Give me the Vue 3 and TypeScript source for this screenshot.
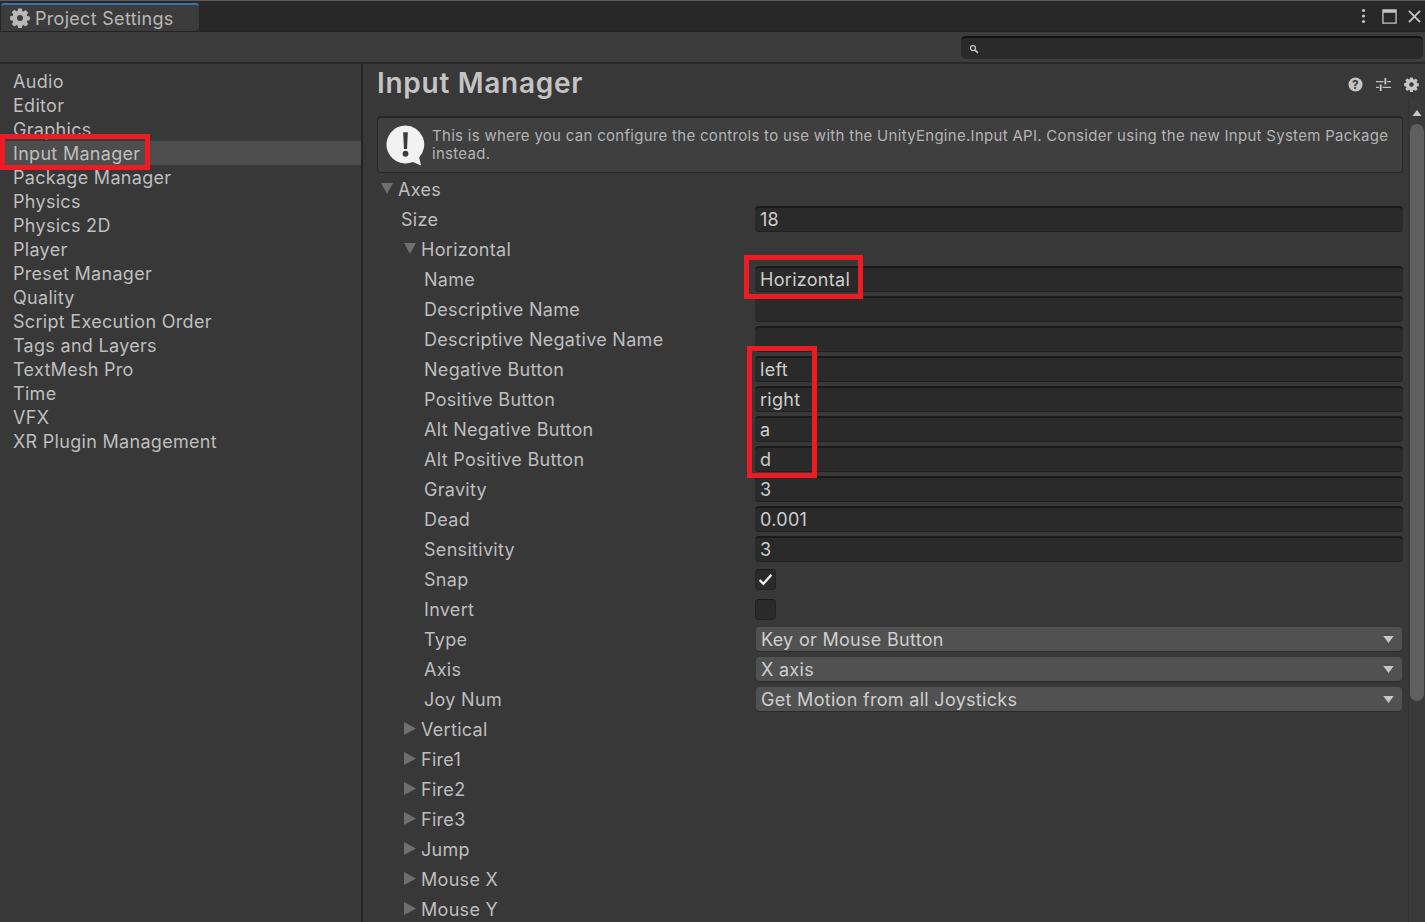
<script setup lang="ts">
type Row = { label: string; indent: number; kind: 'text' | 'check' | 'select' | 'fold' | 'plain'; value?: string; open?: boolean; checked?: boolean }
const nav = ['Audio','Editor','Graphics','Input Manager','Package Manager','Physics','Physics 2D','Player','Preset Manager','Quality','Script Execution Order','Tags and Layers','TextMesh Pro','Time','VFX','XR Plugin Management']
const rows: Row[] = [
  { label: 'Axes', indent: 0, kind: 'fold', open: true },
  { label: 'Size', indent: 1, kind: 'text', value: '18' },
  { label: 'Horizontal', indent: 1, kind: 'fold', open: true },
  { label: 'Name', indent: 2, kind: 'text', value: 'Horizontal' },
  { label: 'Descriptive Name', indent: 2, kind: 'text', value: '' },
  { label: 'Descriptive Negative Name', indent: 2, kind: 'text', value: '' },
  { label: 'Negative Button', indent: 2, kind: 'text', value: 'left' },
  { label: 'Positive Button', indent: 2, kind: 'text', value: 'right' },
  { label: 'Alt Negative Button', indent: 2, kind: 'text', value: 'a' },
  { label: 'Alt Positive Button', indent: 2, kind: 'text', value: 'd' },
  { label: 'Gravity', indent: 2, kind: 'text', value: '3' },
  { label: 'Dead', indent: 2, kind: 'text', value: '0.001' },
  { label: 'Sensitivity', indent: 2, kind: 'text', value: '3' },
  { label: 'Snap', indent: 2, kind: 'check', checked: true },
  { label: 'Invert', indent: 2, kind: 'check', checked: false },
  { label: 'Type', indent: 2, kind: 'select', value: 'Key or Mouse Button' },
  { label: 'Axis', indent: 2, kind: 'select', value: 'X axis' },
  { label: 'Joy Num', indent: 2, kind: 'select', value: 'Get Motion from all Joysticks' },
  ...['Vertical','Fire1','Fire2','Fire3','Jump','Mouse X','Mouse Y'].map((label): Row => ({ label, indent: 1, kind: 'fold', open: false })),
]
const gearPath = 'M9.8 .6h4.4l.5 3 1.6.7 2.5-1.8 3.1 3.1-1.8 2.5.7 1.6 3 .5v4.4l-3 .5-.7 1.6 1.8 2.5-3.1 3.1-2.5-1.8-1.6.7-.5 3H9.8l-.5-3-1.6-.7-2.5 1.8-3.1-3.1 1.8-2.5-.7-1.6-3-.5V9.8l3-.5.7-1.6-1.8-2.5 3.1-3.1 2.5 1.8 1.6-.7zM12 8.4a3.6 3.6 0 1 0 0 7.2 3.6 3.6 0 0 0 0-7.2z'
</script>

<template>
  <div class="window">
    <header class="tabstrip">
      <div class="tab">
        <svg class="tab-gear" viewBox="0 0 24 24"><path :d="gearPath" fill-rule="evenodd" /></svg>
        <span>Project Settings</span>
      </div>
      <div class="win-controls">
        <svg class="kebab" viewBox="0 0 4 16"><circle cx="2" cy="2.5" r="1.6" /><circle cx="2" cy="8" r="1.6" /><circle cx="2" cy="13.5" r="1.6" /></svg>
        <svg class="maxi" viewBox="0 0 16 16"><path d="M1 1h14v14H1z" fill="none" stroke-width="1.4" /><path d="M1 1h14v3H1z" class="solid" /></svg>
        <svg class="close" viewBox="0 0 14 14"><path d="M1 1l12 12M13 1L1 13" fill="none" stroke-width="2" /></svg>
      </div>
    </header>
    <div class="toolbar">
      <div class="search">
        <svg viewBox="0 0 12 12"><circle cx="4.8" cy="4.8" r="3" fill="none" stroke-width="1.5" /><path d="M7 7l3.6 3.6" fill="none" stroke-width="2" /></svg>
      </div>
    </div>
    <div class="body">
      <nav class="sidebar">
        <div v-for="item in nav" :key="item" class="nav-item" :class="{ selected: item === 'Input Manager' }">{{ item }}</div>
      </nav>
      <main class="main">
        <div class="title-row">
          <h1>Input Manager</h1>
          <div class="title-icons">
            <svg class="help" viewBox="0 0 16 16"><circle cx="8" cy="8" r="7.5" /><text x="8" y="12.4" text-anchor="middle">?</text></svg>
            <svg class="sliders" viewBox="0 0 16 16"><path d="M0 5h8M12 5h4M0 11h3M7 11h9" fill="none" stroke-width="1.4" /><path d="M9 1h2v7H9zM4 8h2v7H4z" class="solid" /></svg>
            <svg class="gear" viewBox="0 0 24 24"><path :d="gearPath" fill-rule="evenodd" /></svg>
          </div>
        </div>
        <div class="content">
          <div class="scroll-area">
            <div class="helpbox">
              <svg class="warn" viewBox="0 0 40 42">
                <path d="M20 1a19.5 19.5 0 1 0 7.5 37.5L36 42l-2-8.2A19.5 19.5 0 0 0 20 1z" fill="#f2f2f2" />
                <path d="M17.6 8h4.8l-.8 17h-3.2z" fill="#3c3c3c" />
                <circle cx="20" cy="30" r="3" fill="#3c3c3c" />
              </svg>
              <p>This is where you can configure the controls to use with the UnityEngine.Input API. Consider using the new Input System Package instead.</p>
            </div>
            <div v-for="row in rows" :key="row.label" class="row">
              <div class="label" :class="[`indent-${row.indent}`, { 'has-fold': row.kind === 'fold' }]">
                <svg v-if="row.kind === 'fold'" class="fold" :class="{ open: row.open }" viewBox="0 0 12 13">
                  <path :d="row.open ? 'M0 1h12L6 12z' : 'M0 0l12 6.5L0 13z'" />
                </svg>
                <span>{{ row.label }}</span>
              </div>
              <div v-if="row.kind === 'text'" class="field">{{ row.value }}</div>
              <div v-else-if="row.kind === 'check'" class="checkbox">
                <svg v-if="row.checked" viewBox="0 0 14 12"><path d="M1.5 6.5l3.5 3.5 7.5-8.5" fill="none" stroke="#f0f0f0" stroke-width="2.2" /></svg>
              </div>
              <div v-else-if="row.kind === 'select'" class="select">
                <span>{{ row.value }}</span>
                <svg viewBox="0 0 12 8"><path d="M0 0h12L6 8z" /></svg>
              </div>
            </div>
          </div>
          <div class="scrollbar">
            <svg viewBox="0 0 12 8"><path d="M6 0l6 8H0z" /></svg>
            <div class="thumb"></div>
          </div>
        </div>
      </main>
    </div>
    <div class="mark mark-nav"></div>
    <div class="mark mark-name"></div>
    <div class="mark mark-keys"></div>
  </div>
</template>

<style>
html, body { margin: 0; height: 100%; overflow: hidden; background: #383838; }
</style>

<style scoped>
.window {
  position: relative;
  width: 1425px;
  height: 922px;
  overflow: hidden;
  display: flex;
  flex-direction: column;
  background: #383838;
  color: #bebebe;
  font-family: Inter, "Liberation Sans", sans-serif;
  font-size: 18px;
  letter-spacing: 0.3px;
}
.tabstrip {
  height: 31px;
  flex: none;
  display: flex;
  justify-content: space-between;
  align-items: stretch;
  background: #282828;
  border-top: 1px solid #5a5a5a;
  box-sizing: border-box;
  padding-left: 1px;
}
.tab {
  width: 198px;
  box-sizing: border-box;
  display: flex;
  align-items: center;
  gap: 5px;
  padding: 0 0 0 9px;
  background: #3c3c3c;
  border-top: 2px solid #3a72b0;
  margin-top: 2px;
  border-radius: 3px 3px 3px 0;
  color: #b8b8b8;
}
.tab-gear { width: 20px; height: 20px; fill: #b8b8b8; }
.win-controls { display: flex; align-items: center; gap: 16px; padding-right: 4px; }
.kebab { width: 5px; height: 16px; fill: #c4c4c4; }
.maxi { width: 15px; height: 15px; stroke: #c4c4c4; }
.maxi .solid { fill: #c4c4c4; stroke: none; }
.close { width: 13px; height: 13px; stroke: #c4c4c4; margin-left: -5px; }
.toolbar {
  height: 33px;
  flex: none;
  box-sizing: border-box;
  display: flex;
  justify-content: flex-end;
  align-items: center;
  padding: 0 2px 1px 0;
  background: #3c3c3c;
  border-top: 1px solid #232323;
  border-bottom: 2px solid #2a2a2a;
}
.search {
  width: 462px;
  height: 23px;
  box-sizing: border-box;
  display: flex;
  align-items: center;
  padding-left: 8px;
  background: #2a2a2a;
  border-top: 2px solid #111;
  border-radius: 5px;
  margin-top: 2px;
}
.search svg { width: 10px; height: 10px; stroke: #c4c4c4; }
.body { flex: 1; min-height: 0; display: flex; }
.sidebar {
  width: 363px;
  flex: none;
  box-sizing: border-box;
  padding-top: 5px;
  border-right: 2px solid #232323;
}
.nav-item { height: 24px; line-height: 26px; padding-left: 13px; }
.nav-item.selected { background: #4d4d4d; }
.main { flex: 1; min-width: 0; display: flex; flex-direction: column; }
.title-row {
  height: 49px;
  flex: none;
  box-sizing: border-box;
  display: flex;
  justify-content: space-between;
  align-items: center;
  padding: 0 6px 11px 14px;
}
h1 { margin: 0; font-size: 28px; font-weight: 600; letter-spacing: 0.72px; color: #c4c4c4; }
.title-icons { display: flex; align-items: center; gap: 13px; margin-top: 2px; }
.title-icons svg { width: 15px; height: 15px; fill: #c4c4c4; }
.help text { font: 700 12.5px Inter, "Liberation Sans", sans-serif; fill: #383838; }
.sliders { stroke: #c4c4c4; }
.sliders .solid { stroke: none; }
.content { flex: 1; min-height: 0; display: flex; }
.scroll-area { flex: 1; min-width: 0; padding-left: 14px; padding-top: 3px; margin-right: 5px; }
.helpbox {
  height: 57px;
  margin-bottom: 1px;
  box-sizing: border-box;
  display: flex;
  align-items: center;
  gap: 7px;
  padding: 0 8px;
  background: #3f3f3f;
  border: 1px solid #282828;
  border-top-width: 2px;
  border-radius: 4px;
}
.warn { width: 39px; height: 42px; flex: none; }
.helpbox p { margin: 0; font-size: 15px; line-height: 18px; letter-spacing: 0.29px; color: #b4b4b4; }
.row { height: 30px; display: flex; align-items: center; }
.label { width: 378px; box-sizing: border-box; flex: none; display: flex; align-items: center; white-space: nowrap; }
.indent-0 { padding-left: 9px; }
.indent-1 { padding-left: 24px; }
.indent-2 { padding-left: 47px; }
.has-fold.indent-0 { padding-left: 4px; }
.has-fold.indent-1 { padding-left: 27px; }
.fold { width: 12px; height: 13px; margin-right: 5px; fill: #6f6f6f; margin-top: -1px; }
.fold.open { margin-top: -2px; }
.field {
  flex: 1;
  height: 26px;
  box-sizing: border-box;
  line-height: 24px;
  padding-left: 5px;
  background: #2a2a2a;
  border-top: 2px solid #1a1a1a;
  border-bottom: 1px solid #212121;
  border-radius: 4px;
  color: #cecece;
}
.checkbox {
  width: 21px;
  height: 21px;
  box-sizing: border-box;
  display: flex;
  align-items: center;
  justify-content: center;
  background: #2a2a2a;
  border: 1px solid #222;
  border-top-color: #1a1a1a;
  border-radius: 4px;
}
.checkbox svg { width: 15px; height: 13px; }
.select {
  flex: 1;
  height: 25px;
  box-sizing: border-box;
  display: flex;
  align-items: center;
  justify-content: space-between;
  margin: 1px 1px 0 1px;
  padding: 0 8px 0 5px;
  background: #515151;
  border-bottom: 1px solid #2a2a2a;
  border-radius: 4px;
  color: #cecece;
}
.select svg { width: 11px; height: 7px; fill: #c8c8c8; }
.scrollbar {
  width: 17px;
  flex: none;
  box-sizing: border-box;
  display: flex;
  flex-direction: column;
  align-items: center;
  margin-top: -13px;
  background: #3a3a3a;
  border-left: 1px solid #333;
}
.scrollbar svg { width: 10px; height: 6px; fill: #c8c8c8; margin: 10px 0 8px; }
.thumb { width: 14px; height: 577px; background: #5f5f5f; border-radius: 7px; }
.mark {
  position: absolute;
  box-sizing: border-box;
  border: 5px solid #ed1c24;
  pointer-events: none;
}
.mark-nav { left: 0; top: 134px; width: 150px; height: 36px; }
.mark-name { left: 744px; top: 255px; width: 119px; height: 44px; }
.mark-keys { left: 747px; top: 346px; width: 70px; height: 132px; }
</style>
